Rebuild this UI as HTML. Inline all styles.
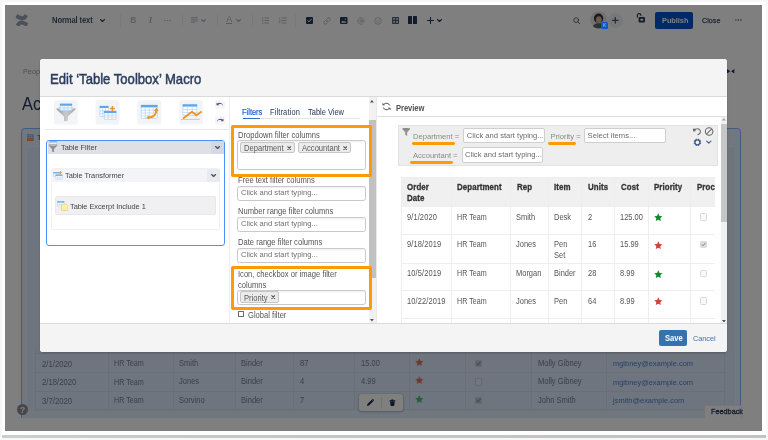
<!DOCTYPE html>
<html lang="en">
<head>
<meta charset="utf-8">
<title>Edit Table Toolbox Macro</title>
<style>
*{box-sizing:border-box;margin:0;padding:0}
html,body{width:768px;height:440px;overflow:hidden}
body{background:#f6f7f7;font-family:"Liberation Sans",Arial,sans-serif;position:relative;color:#172b4d}
.abs{position:absolute}
.t{position:absolute;white-space:nowrap;line-height:1;transform-origin:0 50%}
#shadow{left:1.500px;top:434px;width:764px;height:3.900px;background:linear-gradient(90deg,#cdcdcd,#c6c6c6 30%,#c2c2c2);filter:blur(.4px)}
#frame{left:1.5px;top:1.5px;width:764px;height:433.300px;background:#fff}
#page{left:0;top:0;width:768px;height:440px;background:#fff;clip-path:inset(5px 6.5px 9.400px 5px)}
#dim{left:5px;top:5px;width:756.5px;height:425.600px;background:rgba(0,0,0,.5)}
#dlg{left:40px;top:59px;width:687px;height:292.5px;background:#fff;border-radius:3px;overflow:hidden;box-shadow:0 1px 2.500px rgba(0,0,0,.22)}
#dlg>div.in{position:absolute;left:-40px;top:-59px;width:768px;height:440px}
#page,#dlg>div.in{will-change:transform}
</style>
</head>
<body>
<div id="shadow" class="abs"></div>
<div id="frame" class="abs"></div>
<div id="page" class="abs">
<svg class="abs" style="left:15.30px;top:13.60px;" width="13.8" height="12.8" viewBox="0 0 32 32"><path fill="#98a1b0" d="M2.43 24.4c-.33.54-.7 1.17-1 1.66a1 1 0 0 0 .34 1.36l6.58 4.05a1 1 0 0 0 1.39-.34c.26-.44.6-1 .97-1.62 2.6-4.3 5.22-3.77 9.94-1.52l6.52 3.1a1 1 0 0 0 1.34-.5l3.13-7.08a1 1 0 0 0-.5-1.31c-1.38-.65-4.12-1.94-6.58-3.13-8.87-4.3-16.4-4.03-22.13 5.33z"/><path fill="#98a1b0" d="M29.57 7.62c.33-.54.7-1.17 1-1.66a1 1 0 0 0-.34-1.36L23.65.55a1 1 0 0 0-1.39.34c-.26.44-.6 1-.97 1.62-2.6 4.3-5.22 3.77-9.94 1.52L4.85.93a1 1 0 0 0-1.34.5L.38 8.5a1 1 0 0 0 .5 1.31c1.38.65 4.12 1.94 6.58 3.13 8.87 4.3 16.4 4.02 22.11-5.33z"/></svg>
<div class="t" style="left:51.60px;top:17.27px;font-size:8.26px;color:#42526e;font-weight:bold;letter-spacing:-0.11px;transform:scaleX(0.92);">Normal text</div>
<svg class="abs" style="left:99.90px;top:19.00px;" width="5" height="3.4" viewBox="0 0 10 6.8"><path d="M1.2 1.2 5 5 8.8 1.2" fill="none" stroke="#344563" stroke-width="2.600" stroke-linecap="round" stroke-linejoin="round"/></svg>
<div class="abs" style="left:120.00px;top:14.00px;width:1.00px;height:13.00px;background:#f0f1f3"></div>
<div class="abs" style="left:181.50px;top:14.00px;width:1.00px;height:13.00px;background:#f0f1f3"></div>
<div class="abs" style="left:216.50px;top:14.00px;width:1.00px;height:13.00px;background:#f0f1f3"></div>
<div class="abs" style="left:251.50px;top:14.00px;width:1.00px;height:13.00px;background:#f0f1f3"></div>
<div class="abs" style="left:295.00px;top:14.00px;width:1.00px;height:13.00px;background:#f0f1f3"></div>
<div class="t" style="left:130.20px;top:16.10px;font-size:8.40px;color:#bac1cb;font-weight:bold;">B</div>
<div class="t" style="left:148.80px;top:15.84px;font-size:9.00px;color:#aeb6c2;font-weight:bold;font-style:italic;font-family:&quot;Liberation Serif&quot;,serif;">I</div>
<svg class="abs" style="left:164.40px;top:19.50px;" width="7" height="1.9" viewBox="0 0 15 4"><circle cx="2" cy="2" r="2" fill="#aeb6c2"/><circle cx="7.5" cy="2" r="2" fill="#aeb6c2"/><circle cx="13" cy="2" r="2" fill="#aeb6c2"/></svg>
<svg class="abs" style="left:191.40px;top:17.00px;" width="6.8" height="6.2" viewBox="0 0 14 13"><path d="M0 1h14M0 4.700h14M0 8.400h14M0 12h8" stroke="#aeb6c2" stroke-width="1.800"/></svg>
<svg class="abs" style="left:200.50px;top:19.00px;" width="5" height="3.4" viewBox="0 0 10 6.8"><path d="M1.2 1.2 5 5 8.8 1.2" fill="none" stroke="#aeb6c2" stroke-width="2.600" stroke-linecap="round" stroke-linejoin="round"/></svg>
<div class="t" style="left:226.20px;top:15.14px;font-size:9.00px;color:#aeb6c2;">A</div>
<div class="abs" style="left:226.20px;top:23.00px;width:6.20px;height:0.90px;background:#aeb6c2"></div>
<svg class="abs" style="left:235.50px;top:19.00px;" width="5" height="3.4" viewBox="0 0 10 6.8"><path d="M1.2 1.2 5 5 8.8 1.2" fill="none" stroke="#aeb6c2" stroke-width="2.600" stroke-linecap="round" stroke-linejoin="round"/></svg>
<svg class="abs" style="left:261.50px;top:17.00px;" width="7.5" height="7" viewBox="0 0 15 14"><path d="M5 2h10M5 7h10M5 12h10" stroke="#aeb6c2" stroke-width="1.8"/><circle cx="1.5" cy="2" r="1.3" fill="#aeb6c2"/><circle cx="1.5" cy="7" r="1.3" fill="#aeb6c2"/><circle cx="1.5" cy="12" r="1.3" fill="#aeb6c2"/></svg>
<svg class="abs" style="left:279.00px;top:17.00px;" width="7.5" height="7" viewBox="0 0 15 14"><path d="M5 2h10M5 7h10M5 12h10" stroke="#aeb6c2" stroke-width="1.8"/><path d="M1.2 0v4M0 6h2.6v2H0v2h2.6M0 12h2.6" stroke="#aeb6c2" stroke-width="1" fill="none"/></svg>
<svg class="abs" style="left:305.50px;top:17.00px;" width="7" height="7" viewBox="0 0 14 14"><rect width="14" height="14" rx="2" fill="#253858"/><path d="M3.5 7.2 6 9.8 10.6 4.4" stroke="#fff" stroke-width="2" fill="none" stroke-linecap="round" stroke-linejoin="round"/></svg>
<svg class="abs" style="left:322.50px;top:16.50px;" width="8" height="8" viewBox="0 0 16 16"><g fill="none" stroke="#aeb6c2" stroke-width="1.8" stroke-linecap="round"><path d="M6.8 9.2a3 3 0 0 0 4.2 0l2.7-2.7a3 3 0 0 0-4.2-4.2L8.4 3.4"/><path d="M9.2 6.8a3 3 0 0 0-4.2 0L2.3 9.5a3 3 0 0 0 4.2 4.2l1.1-1.1"/></g></svg>
<svg class="abs" style="left:340.00px;top:17.00px;" width="7.5" height="7" viewBox="0 0 15 14"><rect width="15" height="14" rx="2" fill="#253858"/><path d="M2 11.5 5.5 7l2.5 2.6L10 8l3 3.5z" fill="#fff"/><circle cx="10.6" cy="4.2" r="1.4" fill="#fff"/></svg>
<svg class="abs" style="left:357.00px;top:16.50px;" width="8" height="8" viewBox="0 0 16 16"><g fill="none" stroke="#aeb6c2" stroke-width="1.5"><circle cx="8" cy="8" r="2.6"/><path d="M10.6 5.2v3.6c0 2 3.9 1.6 3.9-1A6.5 6.5 0 1 0 11.6 13.4"/></g></svg>
<svg class="abs" style="left:374.00px;top:16.50px;" width="8" height="8" viewBox="0 0 16 16"><g fill="none" stroke="#aeb6c2" stroke-width="1.5"><circle cx="8" cy="8" r="6.6"/><path d="M5 9.6c1.4 2 4.6 2 6 0" stroke-linecap="round"/></g><circle cx="5.8" cy="6.2" r="1" fill="#aeb6c2"/><circle cx="10.2" cy="6.2" r="1" fill="#aeb6c2"/></svg>
<svg class="abs" style="left:392.30px;top:17.00px;" width="7" height="7" viewBox="0 0 14 14"><g fill="none" stroke="#505f79" stroke-width="2.600"><rect x="1.100" y="1.100" width="11.800" height="11.800" rx="1.600"/><path d="M1 7h12M7 1v12"/></g></svg>
<div class="abs" style="left:408.30px;top:16.20px;width:3.90px;height:8.00px;background:#253858;border-radius:.5px"></div>
<div class="abs" style="left:413.30px;top:16.20px;width:3.90px;height:8.00px;background:#253858;border-radius:.5px"></div>
<svg class="abs" style="left:426.80px;top:17.00px;" width="7" height="7" viewBox="0 0 14 14"><path d="M7 1v12M1 7h12" stroke="#253858" stroke-width="2.2" stroke-linecap="round"/></svg>
<svg class="abs" style="left:436.80px;top:19.00px;" width="5" height="3.4" viewBox="0 0 10 6.8"><path d="M1.2 1.2 5 5 8.8 1.2" fill="none" stroke="#253858" stroke-width="2.600" stroke-linecap="round" stroke-linejoin="round"/></svg>
<svg class="abs" style="left:572.60px;top:16.80px;" width="7.6" height="7.6" viewBox="0 0 16 16"><g fill="none" stroke="#505f79" stroke-width="1.900" stroke-linecap="round"><circle cx="6.6" cy="6.6" r="5"/><path d="M10.2 10.2 14 14"/></g></svg>
<div class="abs" style="left:607.80px;top:12.70px;width:15.20px;height:15.20px;background:#f0f1f4;border-radius:50%"></div>
<svg class="abs" style="left:612.00px;top:17.00px;" width="6.6" height="6.6" viewBox="0 0 14 14"><path d="M7 1v12M1 7h12" stroke="#42526e" stroke-width="2.600" stroke-linecap="round"/></svg>
<svg class="abs" style="left:589.90px;top:11.40px;" width="17.7" height="17.7" viewBox="0 0 36 36"><defs><clipPath id="av"><circle cx="18" cy="18" r="17.600"/></clipPath></defs><g clip-path="url(#av)"><rect width="36" height="36" fill="#e6e4e0"/><ellipse cx="17.5" cy="15" rx="9.5" ry="10" fill="#3a302c"/><ellipse cx="18" cy="18" rx="6" ry="7.2" fill="#d9b39c"/><path d="M4 36c1-8 7-11 14-11s13 3 14 11z" fill="#5b6470"/></g></svg>
<svg class="abs" style="left:635.30px;top:12.10px;" width="11" height="11.2" viewBox="0 0 18 21"><path d="M3 10V6.5a3.4 3.4 0 0 1 6.8 0" fill="none" stroke="#253858" stroke-width="2" stroke-linecap="round"/><rect x="5.4" y="9.2" width="12" height="10.4" rx="2" fill="#253858"/><rect x="9" y="12.6" width="4.8" height="3.6" rx=".8" fill="#fff"/></svg>
<div class="abs" style="left:655.20px;top:11.80px;width:37.60px;height:17.00px;background:#0052cc;border-radius:2px"></div>
<div class="t" style="left:661.80px;top:17.36px;font-size:8.04px;color:#fff;font-weight:bold;letter-spacing:-0.05px;transform:scaleX(0.92);">Publish</div>
<div class="t" style="left:702.20px;top:17.46px;font-size:7.83px;color:#42526e;transform:scaleX(0.92);-webkit-text-stroke:.25px #42526e;">Close</div>
<svg class="abs" style="left:735.30px;top:19.00px;" width="6.8" height="1.9" viewBox="0 0 15 4"><circle cx="2" cy="2" r="1.6" fill="#42526e"/><circle cx="7.5" cy="2" r="1.6" fill="#42526e"/><circle cx="13" cy="2" r="1.6" fill="#42526e"/></svg>
<div class="t" style="left:22.60px;top:67.91px;font-size:7.93px;color:#97a0af;transform:scaleX(0.92);">People</div>
<div class="t" style="left:22.20px;top:95.38px;font-size:18.22px;color:#253858;transform:scaleX(0.9);">Accounts</div>
<svg class="abs" style="left:727.20px;top:68.50px;" width="7.4" height="4.6" viewBox="0 0 7.400 4.600"><path d="M0 0L3.300 2.300L0 4.600zM7.400 0L4.100 2.300L7.400 4.600z" fill="#253858"/></svg>
<div class="abs" style="left:0;top:120px;width:768px;height:297.700px;overflow:hidden"><div class="abs" style="left:21.20px;top:8.00px;width:719.60px;height:322.00px;background:#e3eeff;border:1.700px solid #86b6ff;border-radius:3.500px"></div></div>
<svg class="abs" style="left:27.20px;top:133.60px;" width="6.8" height="7.4" viewBox="0 0 14 15"><rect width="14" height="7" fill="#86aee6"/><path d="M0 2.300h14M4.700 0v7M9.300 0v7" stroke="#dfe9f8" stroke-width="1"/><rect y="8" width="14" height="7" fill="#e68d63"/><path d="M2 11h10" stroke="#f4b58f" stroke-width="1.4"/></svg>
<div class="t" style="left:36.80px;top:134.06px;font-size:8.04px;color:#42526e;transform:scaleX(0.92);">Table Toolbox</div>
<div class="abs" style="left:26.40px;top:145.50px;width:709.60px;height:267.30px;background:#dfeafc;border:1px solid #eaf2ff;border-radius:2px"></div>
<div class="abs" style="left:35.80px;top:353.30px;width:689.00px;height:1.00px;background:#d2ddef"></div>
<div class="abs" style="left:35.80px;top:372.00px;width:689.00px;height:1.00px;background:#d2ddef"></div>
<div class="abs" style="left:35.80px;top:390.70px;width:689.00px;height:1.00px;background:#d2ddef"></div>
<div class="abs" style="left:35.80px;top:409.10px;width:689.00px;height:1.00px;background:#d2ddef"></div>
<div class="abs" style="left:35.30px;top:345.00px;width:1.00px;height:64.60px;background:#d2ddef"></div>
<div class="abs" style="left:107.50px;top:345.00px;width:1.00px;height:64.60px;background:#d2ddef"></div>
<div class="abs" style="left:173.30px;top:345.00px;width:1.00px;height:64.60px;background:#d2ddef"></div>
<div class="abs" style="left:235.30px;top:345.00px;width:1.00px;height:64.60px;background:#d2ddef"></div>
<div class="abs" style="left:292.70px;top:345.00px;width:1.00px;height:64.60px;background:#d2ddef"></div>
<div class="abs" style="left:354.00px;top:345.00px;width:1.00px;height:64.60px;background:#d2ddef"></div>
<div class="abs" style="left:408.50px;top:345.00px;width:1.00px;height:64.60px;background:#d2ddef"></div>
<div class="abs" style="left:465.30px;top:345.00px;width:1.00px;height:64.60px;background:#d2ddef"></div>
<div class="abs" style="left:531.00px;top:345.00px;width:1.00px;height:64.60px;background:#d2ddef"></div>
<div class="abs" style="left:606.00px;top:345.00px;width:1.00px;height:64.60px;background:#d2ddef"></div>
<div class="abs" style="left:724.30px;top:345.00px;width:1.00px;height:64.60px;background:#d2ddef"></div>
<div class="t" style="left:41.70px;top:359.99px;font-size:8.42px;color:#74819a;transform:scaleX(0.92);">2/1/2020</div>
<div class="t" style="left:114.10px;top:360.10px;font-size:8.18px;color:#74819a;transform:scaleX(0.88);">HR Team</div>
<div class="t" style="left:179.10px;top:360.09px;font-size:8.21px;color:#74819a;transform:scaleX(0.92);">Smith</div>
<div class="t" style="left:241.10px;top:360.09px;font-size:8.21px;color:#74819a;transform:scaleX(0.92);">Binder</div>
<div class="t" style="left:299.90px;top:360.09px;font-size:8.21px;color:#74819a;transform:scaleX(0.92);">87</div>
<div class="t" style="left:361.10px;top:360.09px;font-size:8.21px;color:#74819a;transform:scaleX(0.92);">15.00</div>
<div class="t" style="left:537.70px;top:360.09px;font-size:8.21px;color:#74819a;transform:scaleX(0.92);">Molly Gibney</div>
<div class="t" style="left:613.10px;top:360.14px;font-size:8.10px;color:#4f80cf;transform:scaleX(0.92);">mgibney@example.com</div>
<svg class="abs" style="left:415.00px;top:357.60px;" width="8.6" height="8.2" viewBox="0 0 20 19"><path d="M10.00 0.40L12.88 6.44L19.51 7.31L14.66 11.91L15.88 18.49L10.00 15.30L4.12 18.49L5.34 11.91L0.49 7.31L7.12 6.44z" fill="#dc7468"/></svg>
<div class="abs" style="left:474.50px;top:360.00px;width:7.50px;height:7.20px;background:#c2c7d1;border:.600px solid #c9d1df;border-radius:1px"></div>
<svg class="abs" style="left:475.60px;top:361.30px;" width="5.2" height="4.6" viewBox="0 0 10 9"><path d="M1.200 4.600 4 7.400 8.800 1.600" stroke="#5e6c84" stroke-width="1.600" fill="none"/></svg>
<div class="t" style="left:41.70px;top:378.39px;font-size:8.42px;color:#74819a;transform:scaleX(0.92);">2/18/2020</div>
<div class="t" style="left:114.10px;top:378.50px;font-size:8.18px;color:#74819a;transform:scaleX(0.88);">HR Team</div>
<div class="t" style="left:179.10px;top:378.49px;font-size:8.21px;color:#74819a;transform:scaleX(0.92);">Jones</div>
<div class="t" style="left:241.10px;top:378.49px;font-size:8.21px;color:#74819a;transform:scaleX(0.92);">Binder</div>
<div class="t" style="left:299.90px;top:378.49px;font-size:8.21px;color:#74819a;transform:scaleX(0.92);">4</div>
<div class="t" style="left:361.10px;top:378.49px;font-size:8.21px;color:#74819a;transform:scaleX(0.92);">4.99</div>
<div class="t" style="left:537.70px;top:378.49px;font-size:8.21px;color:#74819a;transform:scaleX(0.92);">Molly Gibney</div>
<div class="t" style="left:613.10px;top:378.54px;font-size:8.10px;color:#4f80cf;transform:scaleX(0.92);">mgibney@example.com</div>
<svg class="abs" style="left:415.00px;top:376.00px;" width="8.6" height="8.2" viewBox="0 0 20 19"><path d="M10.00 0.40L12.88 6.44L19.51 7.31L14.66 11.91L15.88 18.49L10.00 15.30L4.12 18.49L5.34 11.91L0.49 7.31L7.12 6.44z" fill="#dc7468"/></svg>
<div class="abs" style="left:474.50px;top:378.40px;width:7.50px;height:7.20px;background:#e9effa;border:.600px solid #c9d1df;border-radius:1px"></div>
<div class="t" style="left:41.70px;top:396.89px;font-size:8.42px;color:#74819a;transform:scaleX(0.92);">3/7/2020</div>
<div class="t" style="left:114.10px;top:397.00px;font-size:8.18px;color:#74819a;transform:scaleX(0.88);">HR Team</div>
<div class="t" style="left:179.10px;top:396.99px;font-size:8.21px;color:#74819a;transform:scaleX(0.92);">Sorvino</div>
<div class="t" style="left:241.10px;top:396.99px;font-size:8.21px;color:#74819a;transform:scaleX(0.92);">Binder</div>
<div class="t" style="left:299.90px;top:396.99px;font-size:8.21px;color:#74819a;transform:scaleX(0.92);">7</div>
<div class="t" style="left:537.70px;top:396.99px;font-size:8.21px;color:#74819a;transform:scaleX(0.92);">John Smith</div>
<div class="t" style="left:613.10px;top:397.04px;font-size:8.10px;color:#4f80cf;transform:scaleX(0.92);">jsmith@example.com</div>
<svg class="abs" style="left:415.00px;top:394.50px;" width="8.6" height="8.2" viewBox="0 0 20 19"><path d="M10.00 0.40L12.88 6.44L19.51 7.31L14.66 11.91L15.88 18.49L10.00 15.30L4.12 18.49L5.34 11.91L0.49 7.31L7.12 6.44z" fill="#46c078"/></svg>
<div class="abs" style="left:474.50px;top:396.90px;width:7.50px;height:7.20px;background:#c2c7d1;border:.600px solid #c9d1df;border-radius:1px"></div>
<svg class="abs" style="left:475.60px;top:398.20px;" width="5.2" height="4.6" viewBox="0 0 10 9"><path d="M1.200 4.600 4 7.400 8.800 1.600" stroke="#5e6c84" stroke-width="1.600" fill="none"/></svg>
<div class="abs" style="left:359.00px;top:393.60px;width:44.00px;height:17.80px;background:#fefefc;border-radius:2px;box-shadow:0 0 1px rgba(9,30,66,.4),0 1px 3px rgba(9,30,66,.25)"></div>
<svg class="abs" style="left:366.60px;top:399.20px;" width="7" height="7" viewBox="0 0 14 14"><path d="M0 14l.800-3.800L9.600 1.400l3 3L3.800 13.200zM10.600.400a1.400 1.400 0 0 1 2 0l1 1a1.400 1.400 0 0 1 0 2l-.600.600-3-3z" fill="#172b4d"/></svg>
<div class="abs" style="left:381.20px;top:396.50px;width:0.80px;height:12.00px;background:#e3e4e8"></div>
<svg class="abs" style="left:389.40px;top:399.40px;" width="6.8" height="7" viewBox="0 0 14 14"><path d="M1 2.600h12v1.600H1zM4.800.800h4.400v1.600H4.800zM2.200 5h9.600l-1 7.600a1.600 1.600 0 0 1-1.600 1.400H4.800a1.600 1.600 0 0 1-1.600-1.400z" fill="#172b4d"/></svg>
<div class="abs" style="left:17.00px;top:404.40px;width:11.00px;height:11.00px;background:#8d8f98;border-radius:50%"></div>
<div class="t" style="left:20.20px;top:406.18px;font-size:9.13px;color:#fff;font-weight:bold;transform:scaleX(0.92);">?</div>
<div class="abs" style="left:704.00px;top:405.40px;width:38.40px;height:12.20px;background:#fff;border:1px solid #ecedf0;border-bottom:none;border-radius:2px 2px 0 0"></div>
<div class="t" style="left:711.00px;top:408.31px;font-size:7.93px;color:#253858;transform:scaleX(0.92);-webkit-text-stroke:.3px #253858;">Feedback</div>
</div>
<div id="dim" class="abs"></div>
<div class="abs" style="left:601px;top:22.400px;width:6.900px;height:6.900px;background:#0f55c6;border-radius:1.500px"></div><div class="t" style="left:602.700px;top:23.500px;font-size:4.800px;font-weight:bold;color:#7aa2e8">K</div>
<div id="dlg" class="abs"><div class="in">
<div class="abs" style="left:40.00px;top:59.00px;width:687.00px;height:37.60px;background:#f4f4f4;border-bottom:1px solid #dadada"></div>
<div class="abs" style="left:40.00px;top:323.40px;width:687.00px;height:28.60px;background:#f4f4f4;border-top:1px solid #dadada"></div>
<div class="t" style="left:50.30px;top:71.85px;font-size:14.89px;color:#2c3e5e;transform:scaleX(0.88);-webkit-text-stroke:.5px #2c3e5e;">Edit ‘Table Toolbox’ Macro</div>
<div class="abs" style="left:229.00px;top:96.60px;width:1.00px;height:226.80px;background:#eeeef1"></div>
<div class="abs" style="left:375.60px;top:96.60px;width:1.00px;height:226.80px;background:#e9e9e9"></div>
<svg class="abs" style="left:0;top:0" width="768" height="440" viewBox="0 0 768 440"><rect x="54" y="100.2" width="23.8" height="24.2" rx="2.5" fill="#f3f4f7"/><rect x="95.6" y="100.2" width="23.8" height="24.2" rx="2.5" fill="#f3f4f7"/><rect x="137.4" y="100.2" width="23.8" height="24.2" rx="2.5" fill="#f3f4f7"/><rect x="179.2" y="100.2" width="23.8" height="24.2" rx="2.5" fill="#f3f4f7"/><defs><linearGradient id="fg" x1="0" y1="0" x2="1" y2="0"><stop offset="0" stop-color="#9b9c9e"/><stop offset=".5" stop-color="#c9cacc"/><stop offset="1" stop-color="#a2a3a5"/></linearGradient></defs><path d="M56.500 108.800C57.500 106.600 74.600 106.600 75.600 108.800C75.800 110 68.200 115.600 67.800 116.800V120.800L64 121.200V116.800C63.600 115.600 56.200 110 56.500 108.800z" fill="url(#fg)"/><ellipse cx="66" cy="108.600" rx="8.800" ry="1.500" fill="#d4d5d7"/><rect x="60.2" y="104" width="11.60" height="6.40" fill="#fff" stroke="#aacdf1" stroke-width=".6"/><rect x="59.900000000000006" y="103.7" width="12.20" height="2.10" fill="#5ea8ea"/><path d="M64.07 105.8V110.4M67.93 105.8V110.4M60.2 107.33H71.8M60.2 108.87H71.8" stroke="#aacdf1" stroke-width=".6" fill="none"/><rect x="100" y="106.2" width="8.20" height="10.40" fill="#fff" stroke="#aacdf1" stroke-width=".6"/><rect x="99.7" y="105.9" width="8.80" height="2.10" fill="#5ea8ea"/><path d="M102.73 108.0V116.6M105.47 108.0V116.6M100 110.87H108.2M100 113.73H108.2" stroke="#aacdf1" stroke-width=".6" fill="none"/><rect x="104.2" y="111.2" width="11.80" height="8.00" fill="#fff" stroke="#aacdf1" stroke-width=".6"/><rect x="103.9" y="110.9" width="12.40" height="2.10" fill="#5ea8ea"/><path d="M108.13 113.0V119.2M112.07 113.0V119.2M104.2 115.07H116M104.2 117.13H116" stroke="#aacdf1" stroke-width=".6" fill="none"/><path d="M112.400 106V111M109.900 108.500H114.900" stroke="#f0942a" stroke-width="1.500"/><rect x="141.2" y="105.2" width="16.00" height="13.40" fill="#fff" stroke="#aacdf1" stroke-width=".6"/><rect x="140.89999999999998" y="104.9" width="16.60" height="2.50" fill="#5ea8ea"/><path d="M145.20 107.4V118.6M149.20 107.4V118.6M153.20 107.4V118.6M141.2 110.20H157.2M141.2 113.00H157.2M141.2 115.80H157.2" stroke="#aacdf1" stroke-width=".6" fill="none"/><path d="M156.300 110C156.600 114.500 153 117.400 148.600 117.500" fill="none" stroke="#f0942a" stroke-width="2.100"/><path d="M153.800 110.800L156.500 107.400L158.600 111zM149.200 115.400L146.200 117.500L149.200 119.600z" fill="#f0942a"/><rect x="183" y="104.6" width="13.80" height="10.80" fill="#fff" stroke="#aacdf1" stroke-width=".6"/><rect x="182.7" y="104.3" width="14.40" height="2.30" fill="#5ea8ea"/><path d="M187.60 106.6V115.4M192.20 106.6V115.4M183 109.53H196.8M183 112.47H196.8" stroke="#aacdf1" stroke-width=".6" fill="none"/><path d="M181 119.400H199.700" stroke="#a9a9a9" stroke-width=".6"/><path d="M183 118.600L192 111.800L196.500 115.200L201.600 111.400" fill="none" stroke="#f0942a" stroke-width="1.900" stroke-linejoin="round"/></svg>
<div class="abs" style="left:214.80px;top:99.80px;width:10.00px;height:9.60px;background:#f6f6f8;border-radius:2px"></div>
<div class="abs" style="left:214.80px;top:115.80px;width:10.00px;height:9.60px;background:#f6f6f8;border-radius:2px"></div>
<svg class="abs" style="left:215.60px;top:101.80px;" width="8" height="6" viewBox="0 0 17 13"><path d="M1 1v6h6L4.800 4.800C8 2.600 13 3.600 15.600 9c-1-6-7-9.600-12.800-6z" fill="#42526e"/></svg>
<svg class="abs" style="left:215.60px;top:117.60px;" width="8" height="6" viewBox="0 0 17 13"><path d="M16 1v6h-6l2.200-2.200C9 2.600 4 3.600 1.400 9c1-6 7-9.600 12.800-6z" fill="#42526e"/></svg>
<div class="abs" style="left:45.00px;top:128.80px;width:184.00px;height:1.00px;background:#e8e8e8"></div>
<div class="abs" style="left:46.00px;top:139.60px;width:179.20px;height:106.00px;background:#fff;border:1.700px solid #4b92f8;border-radius:3px"></div>
<div class="abs" style="left:47.50px;top:141.10px;width:176.20px;height:12.50px;background:#dfe0e6;border-radius:1.500px 1.500px 0 0"></div>
<div class="abs" style="left:211.20px;top:141.10px;width:12.50px;height:12.50px;background:#d5d8e1;border-radius:0 1.500px 0 0"></div>
<svg class="abs" style="left:48.00px;top:140.60px;" width="10" height="12" viewBox="0 0 20 24"><rect x="4" y="1" width="13" height="8" fill="#fff" stroke="#aacdf1" stroke-width="1"/><rect x="3.5" y="0.5" width="14" height="2.4" fill="#5ea8ea"/><path d="M8.3 1v8M12.7 1v8M4 6.2h13" stroke="#aacdf1" stroke-width=".8"/><path d="M1 8c2-2.500 16-2.500 18 0 .500 1-6.500 7-7 8.500v6l-4-1.500V16.500C7.500 15 .500 9 1 8z" fill="#8e9094"/><ellipse cx="10" cy="7.800" rx="7.600" ry="1.500" fill="#c9cbcf"/></svg>
<div class="t" style="left:60.80px;top:144.26px;font-size:8.04px;color:#444;letter-spacing:-0.02px;transform:scaleX(0.92);">Table Filter</div>
<svg class="abs" style="left:214.80px;top:145.80px;" width="5.2" height="3.4" viewBox="0 0 10 6.800"><path d="M1.200 1.200 5 5 8.800 1.200" fill="none" stroke="#42526e" stroke-width="2.800" stroke-linecap="round" stroke-linejoin="round"/></svg>
<div class="abs" style="left:50.80px;top:168.30px;width:169.40px;height:61.90px;background:#fff;border:1px solid #f1f1f4;border-radius:2px"></div>
<div class="abs" style="left:51.40px;top:168.60px;width:168.20px;height:13.20px;background:#f3f4f7;border-radius:2px 2px 0 0"></div>
<div class="abs" style="left:206.70px;top:168.60px;width:12.90px;height:13.20px;background:#e8eaf0;border-radius:0 2px 0 0"></div>
<svg class="abs" style="left:53.20px;top:171.00px;" width="9.6" height="8.6" viewBox="0 0 20 18"><rect x="1" y="3" width="12" height="9" fill="#fff" stroke="#aacdf1" stroke-width="1"/><rect x="0.5" y="2.5" width="13" height="2.7" fill="#5ea8ea"/><path d="M5.0 3v9M9.0 3v9M1 8.9h12" stroke="#aacdf1" stroke-width=".8"/><rect x="6" y="8" width="13" height="9" fill="#fff" stroke="#aacdf1" stroke-width="1"/><rect x="5.5" y="7.5" width="14" height="2.7" fill="#5ea8ea"/><path d="M10.3 8v9M14.7 8v9M6 13.9h13" stroke="#aacdf1" stroke-width=".8"/><path d="M15.500 0v7M12 3.500h7" stroke="#f0942a" stroke-width="2"/></svg>
<div class="t" style="left:65.20px;top:172.26px;font-size:8.04px;color:#444;letter-spacing:-0.03px;transform:scaleX(0.92);">Table Transformer</div>
<svg class="abs" style="left:210.60px;top:173.70px;" width="5.2" height="3.4" viewBox="0 0 10 6.800"><path d="M1.200 1.200 5 5 8.800 1.200" fill="none" stroke="#42526e" stroke-width="2.800" stroke-linecap="round" stroke-linejoin="round"/></svg>
<div class="abs" style="left:54.80px;top:196.00px;width:161.40px;height:18.50px;background:#f0f0f3;border:1px solid #e8e8ec;border-radius:2px"></div>
<svg class="abs" style="left:56.60px;top:200.50px;" width="11.5" height="10" viewBox="0 0 23 20"><rect x="1" y="1" width="13" height="9" fill="#fff" stroke="#aacdf1" stroke-width="1"/><rect x="0.5" y="0.5" width="14" height="2.7" fill="#5ea8ea"/><path d="M5.3 1v9M9.7 1v9M1 6.9h13" stroke="#aacdf1" stroke-width=".8"/><path d="M9 6h9l4 4v9H9z" fill="#fbf0a8" stroke="#d8c65a" stroke-width="1"/></svg>
<div class="t" style="left:69.80px;top:202.76px;font-size:8.04px;color:#444;letter-spacing:-0.05px;transform:scaleX(0.92);">Table Excerpt Include 1</div>
<div class="t" style="left:241.60px;top:108.61px;font-size:8.15px;color:#2264d1;transform:scaleX(0.92);-webkit-text-stroke:.2px #2264d1;">Filters</div>
<div class="t" style="left:269.60px;top:108.61px;font-size:8.15px;color:#253858;letter-spacing:0.14px;transform:scaleX(0.92);">Filtration</div>
<div class="t" style="left:308.30px;top:108.61px;font-size:8.15px;color:#253858;transform:scaleX(0.92);">Table View</div>
<div class="abs" style="left:242.50px;top:118.00px;width:117.50px;height:0.80px;background:#e6e6e6"></div>
<div class="abs" style="left:242.80px;top:117.60px;width:17.20px;height:1.30px;background:#2f6fd0"></div>
<div class="t" style="left:237.70px;top:131.97px;font-size:8.26px;color:#555;letter-spacing:0.02px;transform:scaleX(0.92);">Dropdown filter columns</div>
<div class="abs" style="left:237.30px;top:140.00px;width:128.30px;height:29.60px;background:linear-gradient(#f0f0f0,#fff 2.500px);border:1px solid #c9c9c9;border-radius:2.500px"></div>
<div class="abs" style="left:240.20px;top:142.40px;width:54.80px;height:10.50px;background:#ebebeb;border:1px solid #c6c6c6;border-radius:2px"></div><div class="t" style="left:243.80px;top:145.32px;font-size:8.26px;color:#5a5a5a;transform:scaleX(0.92);">Department</div><svg class="abs" style="left:287.40px;top:145.65px;" width="4.4" height="4.4" viewBox="0 0 9 9"><path d="M1 1l7 7M8 1 1 8" stroke="#555" stroke-width="2.200"/></svg>
<div class="abs" style="left:298.10px;top:142.40px;width:52.60px;height:10.50px;background:#ebebeb;border:1px solid #c6c6c6;border-radius:2px"></div><div class="t" style="left:301.70px;top:145.32px;font-size:8.26px;color:#5a5a5a;transform:scaleX(0.92);">Accountant</div><svg class="abs" style="left:343.10px;top:145.65px;" width="4.4" height="4.4" viewBox="0 0 9 9"><path d="M1 1l7 7M8 1 1 8" stroke="#555" stroke-width="2.200"/></svg>
<div class="t" style="left:237.70px;top:177.17px;font-size:8.26px;color:#555;transform:scaleX(0.92);">Free text filter columns</div>
<div class="abs" style="left:237.30px;top:185.50px;width:128.30px;height:15.70px;background:linear-gradient(#f0f0f0,#fff 2.500px);border:1px solid #c9c9c9;border-radius:2.500px"></div>
<div class="t" style="left:241.00px;top:189.26px;font-size:7.60px;color:#707070;">Click and start typing...</div>
<div class="t" style="left:237.70px;top:208.37px;font-size:8.26px;color:#555;transform:scaleX(0.92);">Number range filter columns</div>
<div class="abs" style="left:237.30px;top:216.60px;width:128.30px;height:15.50px;background:linear-gradient(#f0f0f0,#fff 2.500px);border:1px solid #c9c9c9;border-radius:2.500px"></div>
<div class="t" style="left:241.00px;top:220.26px;font-size:7.60px;color:#707070;">Click and start typing...</div>
<div class="t" style="left:237.70px;top:239.27px;font-size:8.26px;color:#555;transform:scaleX(0.92);">Date range filter columns</div>
<div class="abs" style="left:237.30px;top:247.70px;width:128.30px;height:15.60px;background:linear-gradient(#f0f0f0,#fff 2.500px);border:1px solid #c9c9c9;border-radius:2.500px"></div>
<div class="t" style="left:241.00px;top:251.36px;font-size:7.60px;color:#707070;">Click and start typing...</div>
<div class="t" style="left:237.70px;top:270.57px;font-size:8.26px;color:#555;transform:scaleX(0.92);">Icon, checkbox or image filter</div>
<div class="t" style="left:237.70px;top:281.57px;font-size:8.26px;color:#555;transform:scaleX(0.92);">columns</div>
<div class="abs" style="left:237.30px;top:289.80px;width:128.30px;height:15.50px;background:linear-gradient(#f0f0f0,#fff 2.500px);border:1px solid #c9c9c9;border-radius:2.500px"></div>
<div class="abs" style="left:240.20px;top:291.30px;width:38.80px;height:11.40px;background:#ebebeb;border:1px solid #c6c6c6;border-radius:2px"></div><div class="t" style="left:243.80px;top:294.67px;font-size:8.26px;color:#5a5a5a;transform:scaleX(0.92);">Priority</div><svg class="abs" style="left:271.40px;top:295.00px;" width="4.4" height="4.4" viewBox="0 0 9 9"><path d="M1 1l7 7M8 1 1 8" stroke="#555" stroke-width="2.200"/></svg>
<div class="abs" style="left:237.60px;top:311.00px;width:6.20px;height:5.80px;background:#fff;border:.9px solid #6a6a6a;border-radius:.5px"></div>
<div class="t" style="left:248.40px;top:311.97px;font-size:8.26px;color:#555;transform:scaleX(0.92);">Global filter</div>
<div class="abs" style="left:369.00px;top:96.60px;width:6.60px;height:226.80px;background:#f1f1f1"></div>
<div class="abs" style="left:369.00px;top:119.60px;width:6.60px;height:158.80px;background:#c1c1c1"></div>
<svg class="abs" style="left:370.40px;top:100.20px;" width="3.8" height="2.6" viewBox="0 0 8 5"><path d="M0 5 4 0l4 5z" fill="#505050"/></svg>
<svg class="abs" style="left:370.40px;top:319.40px;" width="3.8" height="2.6" viewBox="0 0 8 5"><path d="M0 0 4 5l4-5z" fill="#505050"/></svg>
<div class="abs" style="left:231.10px;top:125.30px;width:140.90px;height:51.40px;border:3.800px solid #fd9a08;border-radius:1.800px"></div>
<div class="abs" style="left:231.20px;top:265.70px;width:140.80px;height:44.40px;border:3.800px solid #fd9a08;border-radius:1.800px"></div>
<svg class="abs" style="left:381.60px;top:101.80px;" width="9" height="9" viewBox="0 0 18 18"><g fill="none" stroke="#555" stroke-width="2"><path d="M15.500 7A7 7 0 0 0 3.500 5"/><path d="M2.500 11a7 7 0 0 0 12 2"/></g><path d="M1 1.500v5h5zM17 16.500v-5h-5z" fill="#555"/></svg>
<div class="t" style="left:395.80px;top:104.97px;font-size:8.26px;color:#505050;font-weight:bold;letter-spacing:-0.05px;transform:scaleX(0.92);">Preview</div>
<div class="abs" style="left:376.60px;top:115.80px;width:350.40px;height:0.80px;background:#dedede"></div>
<div class="abs" style="left:398.20px;top:125.00px;width:319.40px;height:41.40px;background:#eeeeee;border:1px solid #e2e2e2"></div>
<svg class="abs" style="left:402.00px;top:128.00px;" width="8.4" height="8.4" viewBox="0 0 17 17"><path d="M.500 1.500h16L10.500 9v7l-4-2.500V9z" fill="#939393"/><ellipse cx="8.500" cy="1.800" rx="8" ry="1.600" fill="#858585"/></svg>
<div class="t" style="left:413.00px;top:132.76px;font-size:7.60px;color:#8a8a8a;">Department =</div>
<div class="abs" style="left:411.60px;top:142.00px;width:43.60px;height:2.80px;background:#fd9a08;border-radius:1.400px"></div>
<div class="t" style="left:413.00px;top:151.76px;font-size:7.60px;color:#8a8a8a;">Accountant =</div>
<div class="abs" style="left:410.00px;top:161.40px;width:43.40px;height:2.80px;background:#fd9a08;border-radius:1.400px"></div>
<div class="t" style="left:550.40px;top:132.76px;font-size:7.60px;color:#8a8a8a;">Priority =</div>
<div class="abs" style="left:548.00px;top:142.00px;width:27.60px;height:2.80px;background:#fd9a08;border-radius:1.400px"></div>
<div class="abs" style="left:463.40px;top:128.20px;width:81.20px;height:15.20px;background:#fff;border:1px solid #cfcfcf;border-radius:2px"></div><div class="t" style="left:466.80px;top:131.96px;font-size:7.60px;color:#6c6c6c;">Click and start typing...</div>
<div class="abs" style="left:461.60px;top:147.40px;width:81.00px;height:15.60px;background:#fff;border:1px solid #cfcfcf;border-radius:2px"></div><div class="t" style="left:465.00px;top:151.36px;font-size:7.60px;color:#6c6c6c;">Click and start typing...</div>
<div class="abs" style="left:584.20px;top:128.20px;width:81.40px;height:15.20px;background:#fff;border:1px solid #cfcfcf;border-radius:2px"></div><div class="t" style="left:587.60px;top:131.96px;font-size:7.60px;color:#6c6c6c;">Select items...</div>
<svg class="abs" style="left:0;top:0" width="768" height="440" viewBox="0 0 768 440"><g fill="none" stroke="#686868" stroke-width="1.05"><path d="M694.600 130.300C696 128.200 699.200 128 700.200 130.600C701 132.800 699.400 134.600 697.400 134.700"/><circle cx="709.100" cy="131.500" r="3.800"/><path d="M706.400 134.200L711.800 128.800"/></g><path d="M693 128.800L695.500 128.600L695.300 131.400L693.100 131.200z" fill="#686868"/><circle cx="697.400" cy="142.300" r="2.500" fill="none" stroke="#3d5a8a" stroke-width="1.300"/><g stroke="#3d5a8a" stroke-width="1.400"><path d="M699.89 143.33L700.82 143.72"/><path d="M698.43 144.79L698.82 145.72"/><path d="M696.37 144.79L695.98 145.72"/><path d="M694.91 143.33L693.98 143.72"/><path d="M694.91 141.27L693.98 140.88"/><path d="M696.37 139.81L695.98 138.88"/><path d="M698.43 139.81L698.82 138.88"/><path d="M699.89 141.27L700.82 140.88"/></g><path d="M706.700 141.200L708.800 143.200L710.900 141.200" fill="none" stroke="#3d5a8a" stroke-width="1.100" stroke-linecap="round" stroke-linejoin="round"/></svg>
<div class="abs" style="left:401.00px;top:177.00px;width:314.00px;height:29.80px;background:#f0f0f0"></div>
<div class="abs" style="left:401.00px;top:176.50px;width:314.00px;height:1.00px;background:#eeeeee"></div>
<div class="abs" style="left:401.00px;top:206.30px;width:314.00px;height:1.00px;background:#eeeeee"></div>
<div class="abs" style="left:401.00px;top:233.80px;width:314.00px;height:1.00px;background:#eeeeee"></div>
<div class="abs" style="left:401.00px;top:262.70px;width:314.00px;height:1.00px;background:#eeeeee"></div>
<div class="abs" style="left:401.00px;top:290.10px;width:314.00px;height:1.00px;background:#eeeeee"></div>
<div class="abs" style="left:401.00px;top:317.50px;width:314.00px;height:1.00px;background:#eeeeee"></div>
<div class="abs" style="left:400.50px;top:177.00px;width:1.00px;height:146.40px;background:#eeeeee"></div>
<div class="abs" style="left:450.70px;top:177.00px;width:1.00px;height:146.40px;background:#eeeeee"></div>
<div class="abs" style="left:510.00px;top:177.00px;width:1.00px;height:146.40px;background:#eeeeee"></div>
<div class="abs" style="left:547.70px;top:177.00px;width:1.00px;height:146.40px;background:#eeeeee"></div>
<div class="abs" style="left:581.30px;top:177.00px;width:1.00px;height:146.40px;background:#eeeeee"></div>
<div class="abs" style="left:614.00px;top:177.00px;width:1.00px;height:146.40px;background:#eeeeee"></div>
<div class="abs" style="left:647.70px;top:177.00px;width:1.00px;height:146.40px;background:#eeeeee"></div>
<div class="abs" style="left:690.00px;top:177.00px;width:1.00px;height:146.40px;background:#eeeeee"></div>
<div class="t" style="left:407.00px;top:183.02px;font-size:8.59px;color:#333;font-weight:bold;letter-spacing:0.09px;transform:scaleX(0.92);-webkit-text-stroke:.3px #333;">Order</div>
<div class="t" style="left:457.20px;top:183.02px;font-size:8.59px;color:#333;font-weight:bold;letter-spacing:0.09px;transform:scaleX(0.92);-webkit-text-stroke:.3px #333;">Department</div>
<div class="t" style="left:516.50px;top:183.02px;font-size:8.59px;color:#333;font-weight:bold;letter-spacing:0.09px;transform:scaleX(0.92);-webkit-text-stroke:.3px #333;">Rep</div>
<div class="t" style="left:554.20px;top:183.02px;font-size:8.59px;color:#333;font-weight:bold;letter-spacing:0.09px;transform:scaleX(0.92);-webkit-text-stroke:.3px #333;">Item</div>
<div class="t" style="left:587.80px;top:183.02px;font-size:8.59px;color:#333;font-weight:bold;letter-spacing:0.09px;transform:scaleX(0.92);-webkit-text-stroke:.3px #333;">Units</div>
<div class="t" style="left:620.50px;top:183.02px;font-size:8.59px;color:#333;font-weight:bold;letter-spacing:0.09px;transform:scaleX(0.92);-webkit-text-stroke:.3px #333;">Cost</div>
<div class="t" style="left:654.20px;top:183.02px;font-size:8.59px;color:#333;font-weight:bold;letter-spacing:0.09px;transform:scaleX(0.92);-webkit-text-stroke:.3px #333;">Priority</div>
<div class="t" style="left:407.00px;top:193.92px;font-size:8.59px;color:#333;font-weight:bold;letter-spacing:0.09px;transform:scaleX(0.92);-webkit-text-stroke:.3px #333;">Date</div>
<div class="abs" style="left:696.500px;top:180px;width:18.500px;height:14px;overflow:hidden"><div class="t" style="left:0.00px;top:3.02px;font-size:8.59px;color:#333;font-weight:bold;letter-spacing:0.09px;transform:scaleX(0.92);-webkit-text-stroke:.3px #333;">Processed</div></div>
<div class="t" style="left:406.80px;top:213.71px;font-size:8.15px;color:#555;letter-spacing:0.11px;transform:scaleX(0.92);">9/1/2020</div>
<div class="t" style="left:457.00px;top:213.70px;font-size:8.17px;color:#555;transform:scaleX(0.875);">HR Team</div>
<div class="t" style="left:516.30px;top:213.71px;font-size:8.15px;color:#555;transform:scaleX(0.92);">Smith</div>
<div class="t" style="left:554.00px;top:213.71px;font-size:8.15px;color:#555;transform:scaleX(0.92);">Desk</div>
<div class="t" style="left:587.60px;top:213.71px;font-size:8.15px;color:#555;transform:scaleX(0.92);">2</div>
<div class="t" style="left:620.30px;top:213.71px;font-size:8.15px;color:#555;transform:scaleX(0.92);">125.00</div>
<svg class="abs" style="left:654.00px;top:213.20px;" width="8.6" height="8.4" viewBox="0 0 20 19"><path d="M10.00 0.40L12.88 6.44L19.51 7.31L14.66 11.91L15.88 18.49L10.00 15.30L4.12 18.49L5.34 11.91L0.49 7.31L7.12 6.44z" fill="#14892c"/></svg>
<div class="abs" style="left:699.60px;top:213.00px;width:7.80px;height:7.60px;background:#f8f8f8;border:.800px solid #d9d9d9;border-radius:1.500px"></div>
<div class="t" style="left:406.80px;top:241.21px;font-size:8.15px;color:#555;letter-spacing:0.11px;transform:scaleX(0.92);">9/18/2019</div>
<div class="t" style="left:457.00px;top:241.20px;font-size:8.17px;color:#555;transform:scaleX(0.875);">HR Team</div>
<div class="t" style="left:516.30px;top:241.21px;font-size:8.15px;color:#555;transform:scaleX(0.92);">Jones</div>
<div class="t" style="left:554.00px;top:241.21px;font-size:8.15px;color:#555;transform:scaleX(0.92);">Pen</div>
<div class="t" style="left:587.60px;top:241.21px;font-size:8.15px;color:#555;transform:scaleX(0.92);">16</div>
<div class="t" style="left:620.30px;top:241.21px;font-size:8.15px;color:#555;transform:scaleX(0.92);">15.99</div>
<svg class="abs" style="left:654.00px;top:240.70px;" width="8.6" height="8.4" viewBox="0 0 20 19"><path d="M10.00 0.40L12.88 6.44L19.51 7.31L14.66 11.91L15.88 18.49L10.00 15.30L4.12 18.49L5.34 11.91L0.49 7.31L7.12 6.44z" fill="#d04437"/></svg>
<div class="abs" style="left:699.60px;top:240.50px;width:7.80px;height:7.60px;background:#dedede;border:.800px solid #d9d9d9;border-radius:1.500px"></div>
<svg class="abs" style="left:700.90px;top:241.90px;" width="5.2" height="4.6" viewBox="0 0 10 9"><path d="M1.200 4.600 4 7.400 8.800 1.600" stroke="#777" stroke-width="1.700" fill="none"/></svg>
<div class="t" style="left:406.80px;top:270.41px;font-size:8.15px;color:#555;letter-spacing:0.11px;transform:scaleX(0.92);">10/5/2019</div>
<div class="t" style="left:457.00px;top:270.40px;font-size:8.17px;color:#555;transform:scaleX(0.875);">HR Team</div>
<div class="t" style="left:516.30px;top:270.41px;font-size:8.15px;color:#555;transform:scaleX(0.92);">Morgan</div>
<div class="t" style="left:554.00px;top:270.41px;font-size:8.15px;color:#555;transform:scaleX(0.92);">Binder</div>
<div class="t" style="left:587.60px;top:270.41px;font-size:8.15px;color:#555;transform:scaleX(0.92);">28</div>
<div class="t" style="left:620.30px;top:270.41px;font-size:8.15px;color:#555;transform:scaleX(0.92);">8.99</div>
<svg class="abs" style="left:654.00px;top:269.90px;" width="8.6" height="8.4" viewBox="0 0 20 19"><path d="M10.00 0.40L12.88 6.44L19.51 7.31L14.66 11.91L15.88 18.49L10.00 15.30L4.12 18.49L5.34 11.91L0.49 7.31L7.12 6.44z" fill="#14892c"/></svg>
<div class="abs" style="left:699.60px;top:269.70px;width:7.80px;height:7.60px;background:#f8f8f8;border:.800px solid #d9d9d9;border-radius:1.500px"></div>
<div class="t" style="left:406.80px;top:297.71px;font-size:8.15px;color:#555;letter-spacing:0.11px;transform:scaleX(0.92);">10/22/2019</div>
<div class="t" style="left:457.00px;top:297.70px;font-size:8.17px;color:#555;transform:scaleX(0.875);">HR Team</div>
<div class="t" style="left:516.30px;top:297.71px;font-size:8.15px;color:#555;transform:scaleX(0.92);">Jones</div>
<div class="t" style="left:554.00px;top:297.71px;font-size:8.15px;color:#555;transform:scaleX(0.92);">Pen</div>
<div class="t" style="left:587.60px;top:297.71px;font-size:8.15px;color:#555;transform:scaleX(0.92);">64</div>
<div class="t" style="left:620.30px;top:297.71px;font-size:8.15px;color:#555;transform:scaleX(0.92);">8.99</div>
<svg class="abs" style="left:654.00px;top:297.20px;" width="8.6" height="8.4" viewBox="0 0 20 19"><path d="M10.00 0.40L12.88 6.44L19.51 7.31L14.66 11.91L15.88 18.49L10.00 15.30L4.12 18.49L5.34 11.91L0.49 7.31L7.12 6.44z" fill="#d04437"/></svg>
<div class="abs" style="left:699.60px;top:297.00px;width:7.80px;height:7.60px;background:#f8f8f8;border:.800px solid #d9d9d9;border-radius:1.500px"></div>
<div class="t" style="left:554.00px;top:251.91px;font-size:8.15px;color:#555;transform:scaleX(0.92);">Set</div>
<div class="abs" style="left:720.60px;top:116.60px;width:6.40px;height:206.80px;background:#f1f1f1"></div>
<div class="abs" style="left:720.60px;top:123.80px;width:6.40px;height:98.40px;background:#c6c6c6"></div>
<svg class="abs" style="left:722.00px;top:118.40px;" width="3.8" height="2.6" viewBox="0 0 8 5"><path d="M0 5 4 0l4 5z" fill="#a0a0a0"/></svg>
<svg class="abs" style="left:722.00px;top:319.60px;" width="3.8" height="2.6" viewBox="0 0 8 5"><path d="M0 0 4 5l4-5z" fill="#505050"/></svg>
<div class="abs" style="left:659.00px;top:330.00px;width:28.30px;height:15.80px;background:#3572b0;border-radius:2px"></div>
<div class="t" style="left:664.90px;top:335.27px;font-size:8.26px;color:#fff;font-weight:bold;transform:scaleX(0.92);">Save</div>
<div class="t" style="left:693.20px;top:334.61px;font-size:7.93px;color:#3b73af;transform:scaleX(0.92);">Cancel</div>
</div></div>
</body>
</html>
